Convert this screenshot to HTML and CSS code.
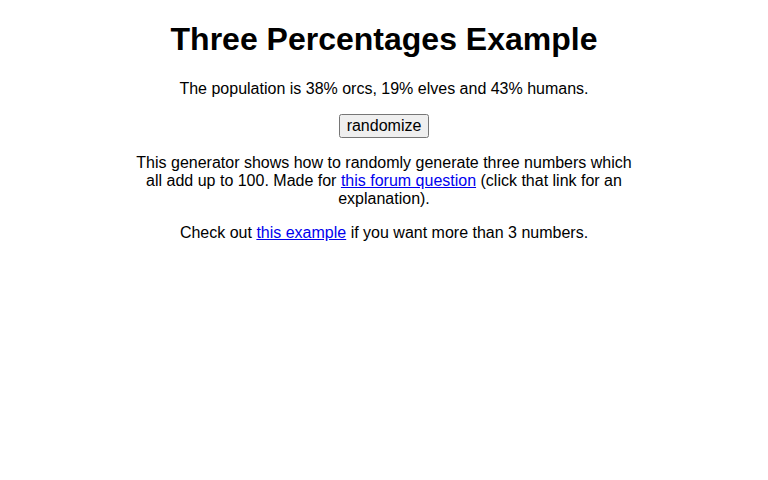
FILE: index.html
```html
<!DOCTYPE html>
<html>
<head>
<meta charset="utf-8">
<title>Three Percentages Example</title>
<link rel="stylesheet" href="styles.css">
</head>
<body>
<div class="page">
  <h1 class="title">Three Percentages Example</h1>
  <p class="result">The population is 38% orcs, 19% elves and 43% humans.</p>
  <p class="actions"><button class="btn">randomize</button></p>
  <p class="info">This generator shows how to randomly generate three numbers which all add up to 100. Made for <a href="#">this forum question</a> (click that link for an explanation).</p>
  <p class="info">Check out <a href="#">this example</a> if you want more than 3 numbers.</p>
</div>
</body>
</html>
```
FILE: styles.css
```css
body {
  margin: 0;
  font-family: "Liberation Sans", Arial, sans-serif;
  font-size: 16px;
  color: #000;
  background: #fff;
}
.page {
  max-width: 500px;
  margin: 0 auto;
  text-align: center;
}
.title {
  font-size: 32px;
  font-weight: bold;
  margin: 21.44px 0;
}
.btn {
  font-family: "Liberation Sans", Arial, sans-serif;
  font-size: 16px;
}
a {
  color: #0000ee;
}
```
